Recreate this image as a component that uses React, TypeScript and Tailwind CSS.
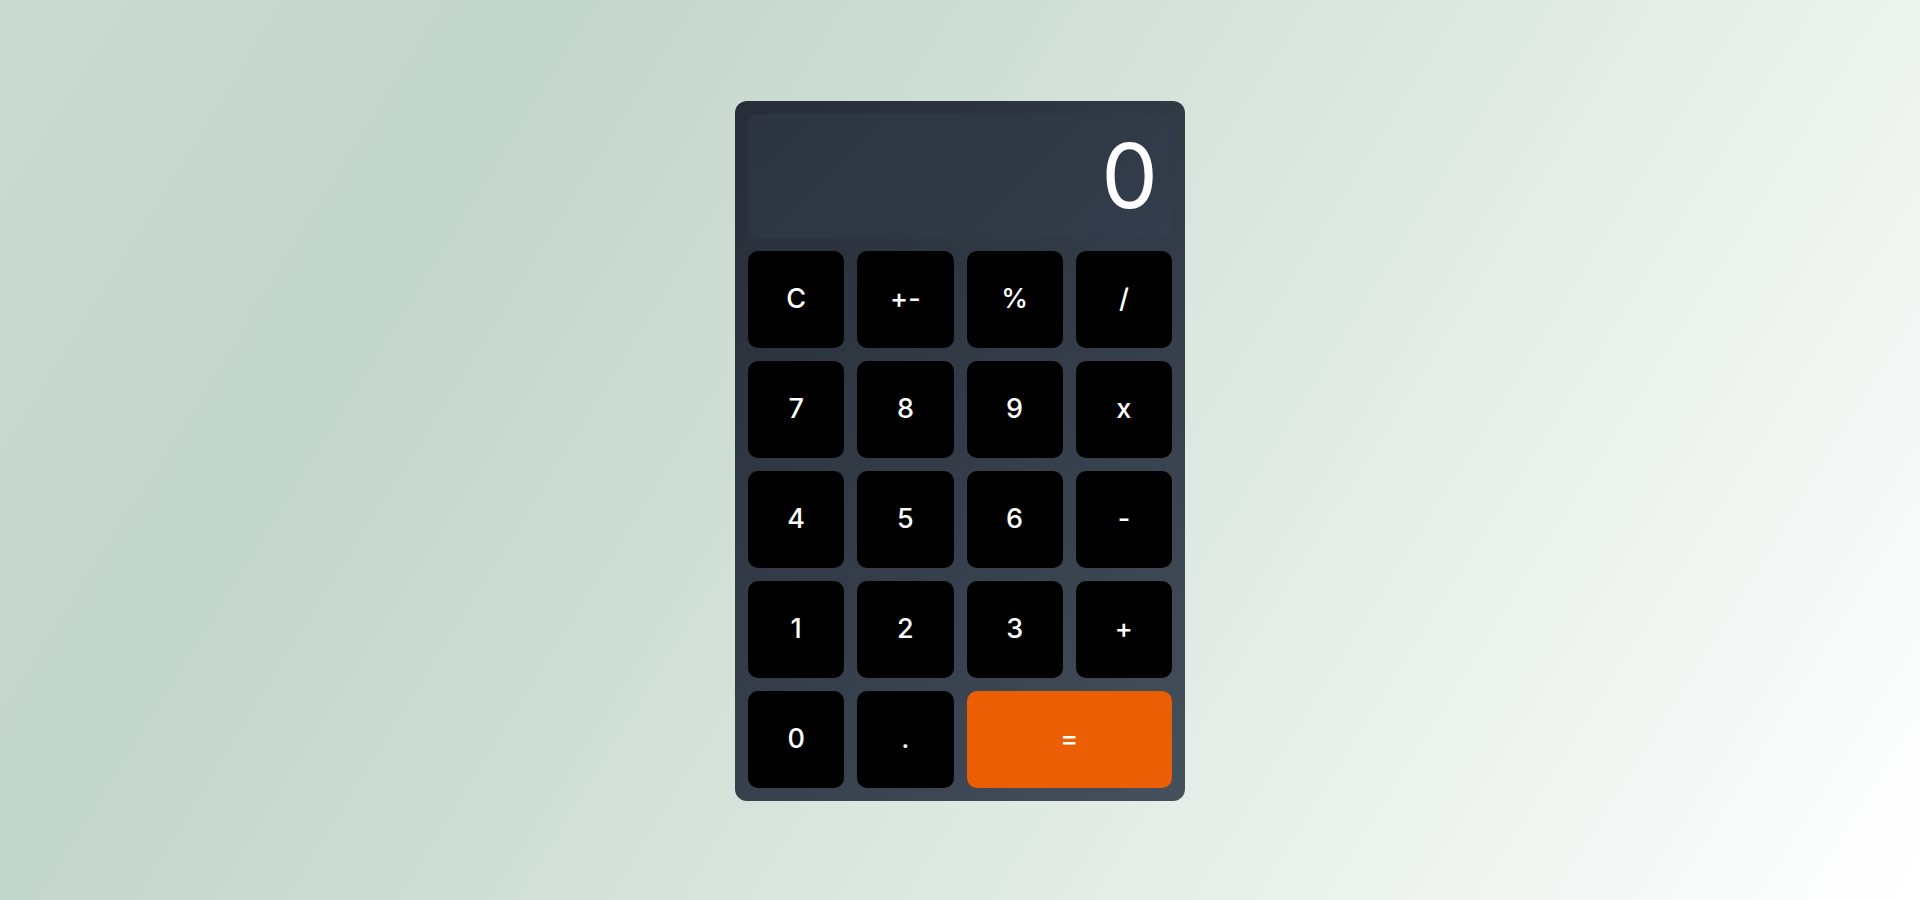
import React from "react";

const keys: { label: string; wide?: boolean; accent?: boolean }[] = [
  { label: "C" },
  { label: "+-" },
  { label: "%" },
  { label: "/" },
  { label: "7" },
  { label: "8" },
  { label: "9" },
  { label: "x" },
  { label: "4" },
  { label: "5" },
  { label: "6" },
  { label: "-" },
  { label: "1" },
  { label: "2" },
  { label: "3" },
  { label: "+" },
  { label: "0" },
  { label: "." },
  { label: "=", wide: true, accent: true },
];

export default function App() {
  return (
    <div
      className="h-screen w-full flex items-center justify-center bg-[linear-gradient(122deg,#cbdbd2_0%,#c2d5ca_22%,#d6e3db_50%,#ffffff_100%)]"
      style={{ fontFamily: "Inter, 'Noto Sans', sans-serif" }}
    >
      <div className="mt-[2px] w-[450px] h-[700px] rounded-[12px] p-[13px] flex flex-col gap-[13px] bg-[linear-gradient(135deg,#272d38_0%,#333c48_50%,#45505d_100%)]">
        <div className="h-[124px] shrink-0 rounded-[10px] bg-[linear-gradient(135deg,#2d3542_0%,#2f3845_55%,#333d4b_100%)] flex items-center justify-end pr-[14px]">
          <span className="text-white text-[90px] leading-none font-normal">0</span>
        </div>
        <div className="flex-1 grid grid-cols-4 grid-rows-5 gap-[13px]">
          {keys.map((k) => (
            <button
              key={k.label}
              className={
                (k.wide ? "col-span-2 " : "") +
                (k.accent ? "bg-[#eb5e04] " : "bg-black ") +
                "rounded-[10px] text-white text-[27px] font-medium flex items-center justify-center"
              }
            >
              {k.label}
            </button>
          ))}
        </div>
      </div>
    </div>
  );
}
